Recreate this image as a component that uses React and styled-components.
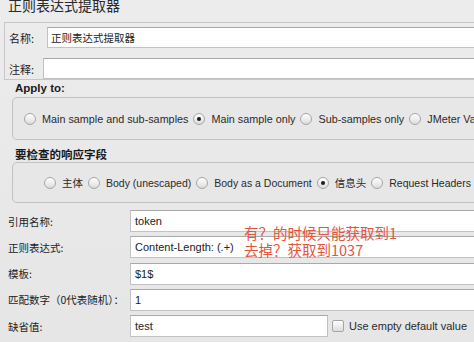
import styled, { createGlobalStyle } from "styled-components";

const GlobalStyle = createGlobalStyle`
  html, body {
    margin: 0;
    padding: 0;
    background: #e8e8e9;
  }
  body {
    font-family: "Liberation Sans", "Noto Sans CJK SC", sans-serif;
    color: #1e1e1e;
  }
`;

const applyOptions = [
  { label: "Main sample and sub-samples" },
  { label: "Main sample only", checked: true },
  { label: "Sub-samples only" },
  { label: "JMeter Variable Name to use" },
];

const fieldOptions = [
  { label: "主体" },
  { label: "Body (unescaped)" },
  { label: "Body as a Document" },
  { label: "信息头", checked: true },
  { label: "Request Headers" },
];

const formRows = [
  { label: "引用名称:", value: "token" },
  { label: "正则表达式:", value: "Content-Length: (.+)" },
  { label: "模板:", value: "$1$" },
  { label: "匹配数字（0代表随机）：", value: "1" },
];

export default function App() {
  return (
    <Page>
      <GlobalStyle />
      <Title>正则表达式提取器</Title>

      <NamePanel>
        <NameRow>
          <NameLabel $width={38}>名称:</NameLabel>
          <TextBox $cjk>正则表达式提取器</TextBox>
        </NameRow>
        <NameRow>
          <NameLabel $width={34}>注释:</NameLabel>
          <TextBox />
        </NameRow>
      </NamePanel>

      <SectionTitle $height={17} $top={0}>Apply to:</SectionTitle>
      <GroupBox $height={43} $indent={11}>
        {applyOptions.map((o) => (
          <Option key={o.label}>
            <Radio $checked={o.checked} />
            {o.label}
          </Option>
        ))}
      </GroupBox>

      <SectionTitle $height={22} $top={6} $cjk>要检查的响应字段</SectionTitle>
      <GroupBox $height={41} $indent={31} $small>
        {fieldOptions.map((o) => (
          <Option key={o.label}>
            <Radio $checked={o.checked} />
            {o.label}
          </Option>
        ))}
      </GroupBox>

      <Form>
        {formRows.map((r) => (
          <FormRow key={r.label}>
            <FieldLabel>{r.label}</FieldLabel>
            <TextBox $tall>{r.value}</TextBox>
          </FormRow>
        ))}
        <FormRow>
          <FieldLabel>缺省值:</FieldLabel>
          <DefaultCell>
            <TextBox $tall $width={198}>test</TextBox>
            <CheckLabel>
              <CheckBox />
              Use empty default value
            </CheckLabel>
          </DefaultCell>
        </FormRow>

        <Note>
          <span>有？的时候只能获取到1</span>
          <span>去掉？获取到1037</span>
        </Note>
      </Form>
    </Page>
  );
}

const Page = styled.div`
  width: 474px;
  height: 342px;
  overflow: hidden;
  background: linear-gradient(#ececed, #e6e6e7);
`;

const Title = styled.div`
  height: 22px;
  padding-left: 8px;
  font-family: "Noto Sans CJK SC", sans-serif;
  font-size: 14px;
  line-height: 11px;
  color: #2a2a2a;
  white-space: nowrap;
`;

const NamePanel = styled.div`
  box-sizing: border-box;
  height: 58px;
  margin-left: 4px;
  margin-right: -10px;
  padding: 4px 4px 1px;
  border: 1px solid #c6c6c8;
  display: flex;
  flex-direction: column;
  gap: 10px;
`;

const NameRow = styled.div`
  display: flex;
  align-items: center;
  height: 21px;
`;

const NameLabel = styled.span`
  width: ${(p) => p.$width}px;
  flex: none;
  font-family: "Noto Sans CJK SC", sans-serif;
  font-size: 11px;
  color: #222;
`;

const TextBox = styled.div`
  box-sizing: border-box;
  flex: ${(p) => (p.$width ? "none" : "1")};
  width: ${(p) => (p.$width ? `${p.$width}px` : "auto")};
  height: ${(p) => (p.$tall ? 22 : 21)}px;
  padding-left: ${(p) => (p.$cjk ? 3 : 4)}px;
  background: #fff;
  border: 1px solid #c2c2c4;
  border-top-color: #a9a9ab;
  display: flex;
  align-items: center;
  font-family: ${(p) =>
    p.$cjk ? `"Noto Sans CJK SC", sans-serif` : `"Liberation Sans", sans-serif`};
  font-size: ${(p) => (p.$cjk ? 10.5 : 11)}px;
  color: #222;
  white-space: nowrap;
`;

const SectionTitle = styled.div`
  box-sizing: border-box;
  height: ${(p) => p.$height}px;
  padding: ${(p) => p.$top}px 0 0 15px;
  line-height: 16px;
  font-weight: bold;
  font-size: 11.5px;
  font-family: ${(p) =>
    p.$cjk ? `"Noto Sans CJK SC", sans-serif` : `"Liberation Sans", sans-serif`};
  color: #1a1a1a;
`;

const GroupBox = styled.div`
  box-sizing: border-box;
  height: ${(p) => p.$height}px;
  margin-left: 12px;
  margin-right: -40px;
  padding-left: ${(p) => p.$indent}px;
  border: 1px solid #c2c2c4;
  border-radius: 5px;
  background: #e7e7e8;
  display: flex;
  align-items: center;
  gap: 5px;
  white-space: nowrap;
  font-size: ${(p) => (p.$small ? 10.5 : 10.8)}px;
`;

const Option = styled.label`
  display: flex;
  align-items: center;
  gap: 6px;
  font-family: "Liberation Sans", "Noto Sans CJK SC", sans-serif;
  color: #2a2a2a;
  flex: none;
`;

const Radio = styled.span`
  position: relative;
  width: 10px;
  height: 10px;
  border-radius: 50%;
  border: 1px solid #a6a6a8;
  background: linear-gradient(#ffffff, #dcdcde);
  flex: none;

  &::after {
    content: "";
    display: ${(p) => (p.$checked ? "block" : "none")};
    position: absolute;
    left: 3px;
    top: 3px;
    width: 4px;
    height: 4px;
    border-radius: 50%;
    background: #1c1c1c;
  }
`;

const Form = styled.div`
  position: relative;
  padding: 7px 0 0 8px;
  display: flex;
  flex-direction: column;
  gap: 4.3px;
`;

const FormRow = styled.div`
  display: grid;
  grid-template-columns: 122px 1fr;
  align-items: center;
  margin-right: -20px;
`;

const FieldLabel = styled.span`
  font-family: "Noto Sans CJK SC", sans-serif;
  font-size: 10.5px;
  color: #222;
  white-space: nowrap;
`;

const DefaultCell = styled.div`
  display: flex;
  align-items: center;
  gap: 4px;
`;

const CheckLabel = styled.label`
  display: flex;
  align-items: center;
  gap: 5px;
  font-size: 11px;
  color: #2a2a2a;
  white-space: nowrap;
`;

const CheckBox = styled.span`
  width: 10px;
  height: 10px;
  border: 1px solid #a6a6a8;
  border-radius: 2px;
  background: linear-gradient(#ffffff, #dcdcde);
`;

const Note = styled.div`
  position: absolute;
  left: 244px;
  top: 21px;
  display: flex;
  flex-direction: column;
  font-family: "Noto Sans CJK SC", sans-serif;
  font-size: 14.5px;
  line-height: 17px;
  color: #e4553d;
  white-space: nowrap;
`;
